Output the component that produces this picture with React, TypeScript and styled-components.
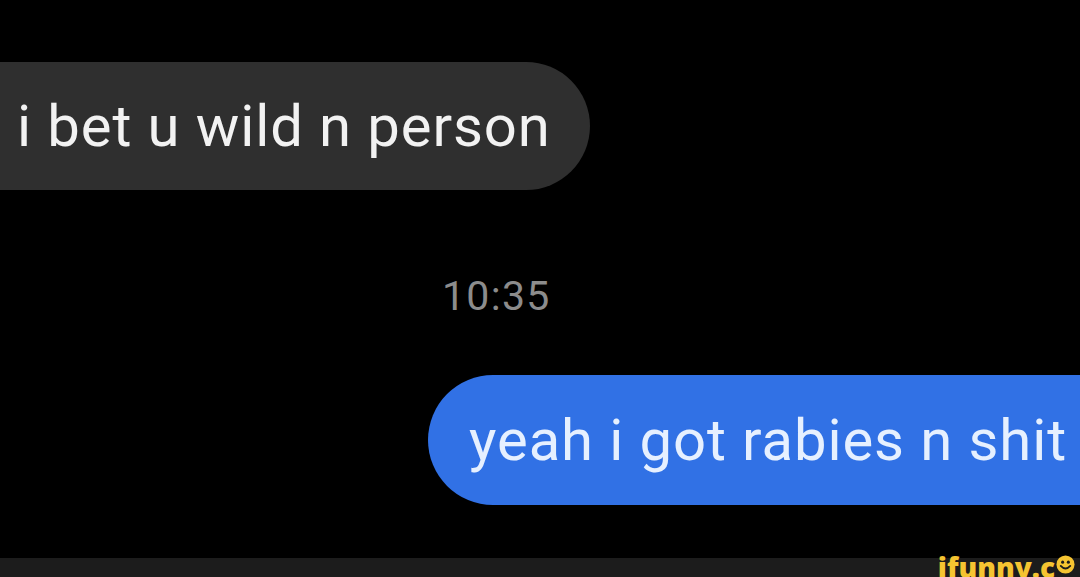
import React from "react";
import styled, { createGlobalStyle } from "styled-components";

const Global = createGlobalStyle`
  html, body { margin: 0; padding: 0; background: #000; overflow: hidden; }
  #root { width: 1080px; height: 577px; }
`;

const Screen = styled.div`
  width: 1080px;
  height: 577px;
  display: flex;
  flex-direction: column;
  background: #000;
  overflow: hidden;
  font-family: Roboto, "Noto Sans", sans-serif;
`;

const Chat = styled.div`
  flex: 1;
  display: flex;
  flex-direction: column;
  padding-top: 62px;
`;

const Row = styled.div<{ $side: "left" | "right" }>`
  display: flex;
  justify-content: ${(p) => (p.$side === "left" ? "flex-start" : "flex-end")};
`;

const Bubble = styled.div<{ $variant: "in" | "out" }>`
  display: flex;
  align-items: center;
  box-sizing: border-box;
  font-size: 58px;
  letter-spacing: 0.9px;
  white-space: nowrap;
  ${(p) =>
    p.$variant === "in"
      ? `
    height: 128px;
    background: #2f2f2f;
    color: #f2f2f2;
    margin-left: -60px;
    padding: 0 0 0 77px;
    border-radius: 0 64px 64px 0;
    width: 650px;
  `
      : `
    height: 130px;
    background: #3171e5;
    color: #e6f0ff;
    margin-right: -60px;
    padding: 0 0 0 41px;
    border-radius: 65px 0 0 65px;
    width: 712px;
  `}
`;

const Time = styled.div`
  margin-top: 86px;
  padding-left: 442px;
  font-size: 41px;
  color: #8c8c8c;
  letter-spacing: 1.3px;
  height: 42px;
  line-height: 40px;
`;

const OutRow = styled(Row)`
  margin-top: 57px;
`;

const Footer = styled.div`
  height: 19px;
  background: #1c1c1c;
  display: flex;
  justify-content: flex-end;
  align-items: flex-start;
  padding-right: 5px;
`;

const Brand = styled.div`
  display: flex;
  align-items: flex-start;
  font-family: "Open Sans", "Noto Sans", sans-serif;
  font-weight: 800;
  font-size: 28px;
  line-height: 28px;
  height: 19px;
  color: #f5c431;
  margin-top: -5px;
`;

const Smile = styled.svg`
  flex-shrink: 0;
  width: 19px;
  height: 19px;
  margin-top: 2px;
  margin-left: 1px;
`;

export default function App() {
  return (
    <>
      <Global />
      <Screen>
        <Chat>
          <Row $side="left">
            <Bubble $variant="in">i bet u wild n person</Bubble>
          </Row>
          <Time>10:35</Time>
          <OutRow $side="right">
            <Bubble $variant="out">yeah i got rabies n shit</Bubble>
          </OutRow>
        </Chat>
        <Footer>
          <Brand>
            ifunny.c
            <Smile viewBox="0 0 20 20">
              <circle cx="10" cy="10" r="9.5" fill="#f5c431" />
              <circle cx="7" cy="7.5" r="1.6" fill="#1c1c1c" />
              <circle cx="13" cy="7.5" r="1.6" fill="#1c1c1c" />
              <path d="M5 11.5 Q10 17 15 11.5" stroke="#1c1c1c" strokeWidth="2" fill="none" strokeLinecap="round" />
            </Smile>
          </Brand>
        </Footer>
      </Screen>
    </>
  );
}
